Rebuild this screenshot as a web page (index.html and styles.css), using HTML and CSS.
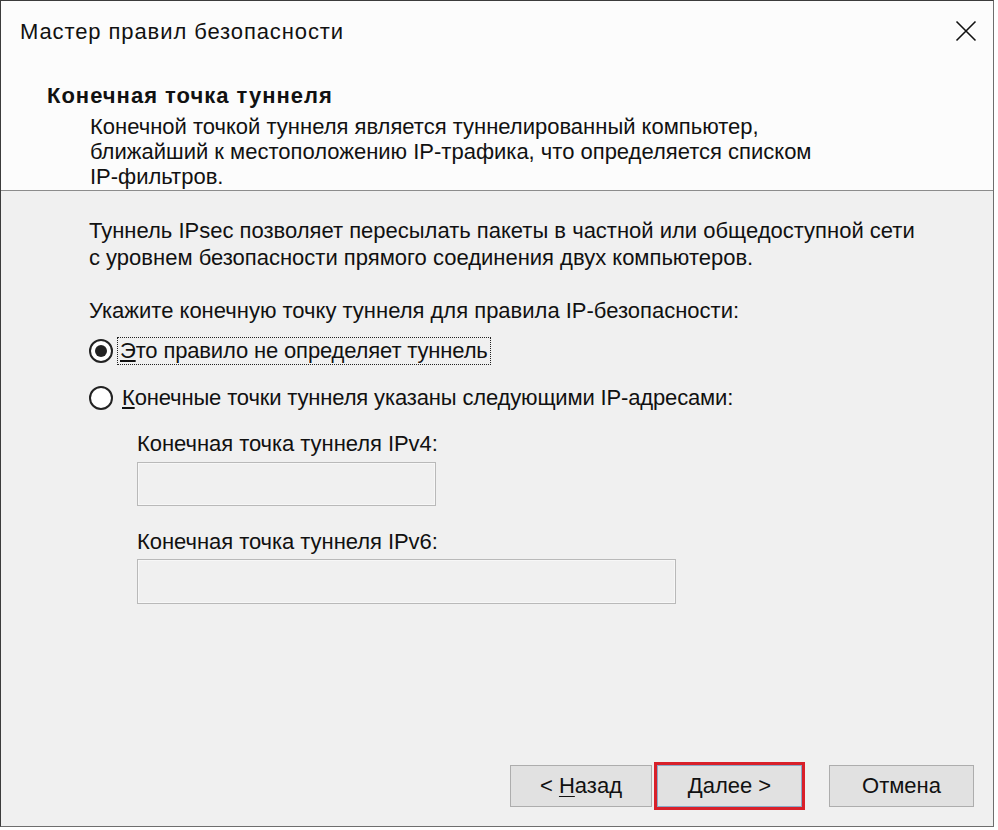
FILE: index.html
```html
<!DOCTYPE html>
<html lang="ru">
<head>
<meta charset="utf-8">
<title>Мастер правил безопасности</title>
<link rel="stylesheet" href="styles.css">
</head>
<body>
<div class="window">
  <div class="titlebar">
    <span class="title">Мастер правил безопасности</span>
    <span class="close" aria-label="Закрыть">
      <svg width="22" height="22" viewBox="0 0 22 22"><path d="M1.5 1.5 L20.5 20.5 M20.5 1.5 L1.5 20.5" stroke="#111" stroke-width="1.6" fill="none"/></svg>
    </span>
  </div>
  <div class="header">
    <div class="heading">Конечная точка туннеля</div>
    <div class="desc">Конечной точкой туннеля является туннелированный компьютер,<br>ближайший к местоположению IP-трафика, что определяется списком<br>IP-фильтров.</div>
  </div>
  <div class="content">
    <p class="para">Туннель IPsec позволяет пересылать пакеты в частной или общедоступной сети<br>с уровнем безопасности прямого соединения двух компьютеров.</p>
    <p class="prompt">Укажите конечную точку туннеля для правила IP-безопасности:</p>
    <div class="radio-row first">
      <span class="radio checked"></span>
      <span class="label focus"><u>Э</u>то правило не определяет туннель</span>
    </div>
    <div class="radio-row second">
      <span class="radio"></span>
      <span class="label"><u>К</u>онечные точки туннеля указаны следующими IP-адресами:</span>
    </div>
    <div class="field">
      <div class="field-label">Конечная точка туннеля IPv4:</div>
      <div class="textbox short"></div>
    </div>
    <div class="field v6">
      <div class="field-label">Конечная точка туннеля IPv6:</div>
      <div class="textbox long"></div>
    </div>
  </div>
  <div class="footer">
    <button class="btn back">&lt; <u>Н</u>азад</button>
    <button class="btn next"><u>Д</u>алее &gt;</button>
    <button class="btn cancel">Отмена</button>
  </div>
</div>
</body>
</html>
```

FILE: styles.css
```css
html, body {
  margin: 0;
  padding: 0;
  background: #ffffff;
}
body {
  font-family: "Liberation Sans", Arial, sans-serif;
  color: #111;
}
.window {
  width: 994px;
  height: 827px;
  box-sizing: border-box;
  border-left: 1px solid #3c3c3c;
  border-top: 1px solid #3c3c3c;
  border-right: 1px solid #6e6e6e;
  border-bottom: 1px solid #6e6e6e;
  display: flex;
  flex-direction: column;
  background: #f0f0f0;
}
.titlebar {
  background: #fcfcfc;
  display: flex;
  align-items: flex-start;
  justify-content: space-between;
  padding: 19px 16px 0 19px;
  height: 44px;
  box-sizing: border-box;
}
.title {
  font-size: 22px;
  line-height: 24px;
  letter-spacing: 0.9px;
  color: #111;
}
.close {
  display: block;
  width: 22px;
  height: 22px;
}
.close svg { display: block; }
.header {
  background: #fcfcfc;
  padding: 39px 0 1px 46px;
  border-bottom: 1px solid #8c8c8c;
}
.heading {
  font-size: 22px;
  font-weight: bold;
  line-height: 24px;
  letter-spacing: 1px;
}
.desc {
  font-size: 22px;
  line-height: 25px;
  margin: 6px 0 0 43px;
  letter-spacing: 0;
}
.content {
  flex: 1;
  padding: 26px 0 0 88px;
  font-size: 22px;
}
.para {
  margin: 0;
  line-height: 27px;
}
.prompt {
  margin: 26px 0 0 0;
  line-height: 27px;
}
.radio-row {
  display: flex;
  align-items: center;
  height: 30px;
}
.radio-row.first { margin-top: 12px; }
.radio-row.second { margin-top: 17px; }
.radio {
  width: 24px;
  height: 24px;
  box-sizing: border-box;
  border: 2px solid #222;
  border-radius: 50%;
  background: #fff;
  position: relative;
  flex: none;
}
.radio.checked::after {
  content: "";
  position: absolute;
  left: 4px;
  top: 4px;
  width: 12px;
  height: 12px;
  border-radius: 50%;
  background: #222;
}
.label {
  margin-left: 7px;
  line-height: 26px;
  padding: 0 2px;
  letter-spacing: -0.15px;
}
.label.focus {
  outline: 1px dotted #222;
  margin-left: 5px;
}
.field {
  margin: 19px 0 0 48px;
}
.field.v6 { margin-top: 24px; }
.field-label {
  line-height: 24px;
  letter-spacing: -0.05px;
}
.textbox {
  margin-top: 6px;
  height: 44px;
  box-sizing: border-box;
  border: 1px solid #b9b9b9;
  background: #f0f0f0;
  box-shadow: inset 0 0 0 1px #f7f7f7;
}
.textbox.short { width: 299px; }
.textbox.long { width: 539px; height: 45px; margin-top: 5px; }
.footer {
  display: flex;
  justify-content: flex-end;
  align-items: center;
  padding: 0 19px 19px 0;
}
.btn {
  font-family: "Liberation Sans", Arial, sans-serif;
  font-size: 22px;
  color: #111;
  height: 42px;
  background: #e1e1e1;
  border: 1px solid #adadad;
  padding: 0;
  margin: 0;
}
.btn u { text-decoration-thickness: 1px; text-underline-offset: 3px; }
.back { width: 142px; }
.next {
  width: 145px;
  margin-left: 5px;
  outline: 3px solid #d8202a;
  outline-offset: 0;
  border-color: #8aa9c8;
}
.cancel { width: 145px; margin-left: 27px; }
```
